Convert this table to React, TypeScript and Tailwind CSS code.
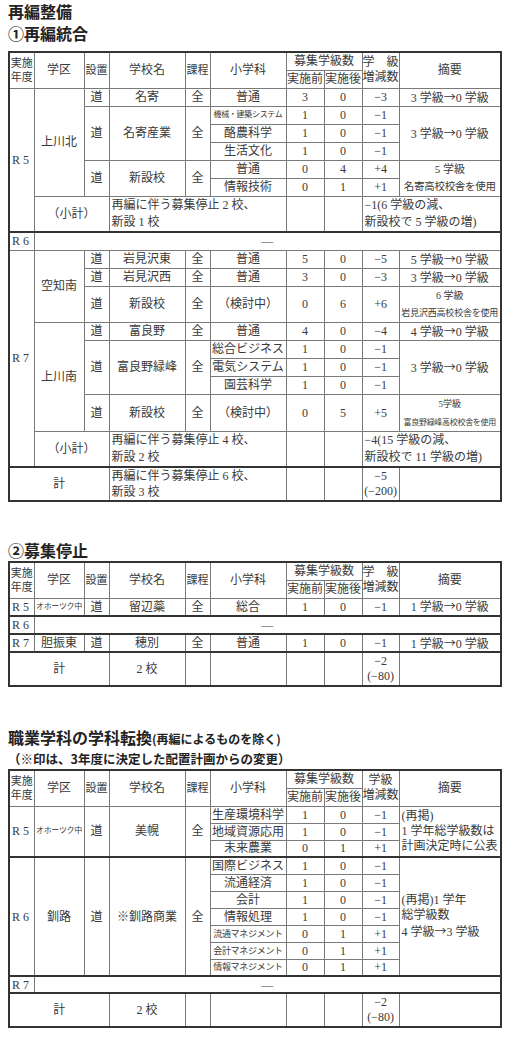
import React from 'react'

// 共通スタイル
const td = 'border border-[#7a7a7a] p-0 text-center align-middle leading-[14px]'
const tdL = 'border border-[#7a7a7a] p-0 pl-[2px] text-left align-middle leading-[14px]'
const thick = 'border-t-2 border-t-[#333]'

function Cols() {
  return (
    <colgroup>
      <col className="w-[25px]" />
      <col className="w-[50px]" />
      <col className="w-[25px]" />
      <col className="w-[76px]" />
      <col className="w-[25px]" />
      <col className="w-[76px]" />
      <col className="w-[38px]" />
      <col className="w-[38px]" />
      <col className="w-[37px]" />
      <col className="w-[102px]" />
    </colgroup>
  )
}

// 「3 学級→0 学級」の表記
function Shift({ from, to }: { from: string; to: string }) {
  return (
    <>
      {from} 学級<span className="font-['Noto_Sans_CJK_JP',sans-serif]">→</span>{to} 学級
    </>
  )
}

function Head({ stacked }: { stacked?: boolean }) {
  return (
    <thead>
      <tr className="h-[18px]">
        <td rowSpan={2} className={td + ' text-[11px] leading-[13px]'}>
          実施<br />年度
        </td>
        <td rowSpan={2} className={td}>学区</td>
        <td rowSpan={2} className={td + ' text-[11px]'}>設置</td>
        <td rowSpan={2} className={td}>学校名</td>
        <td rowSpan={2} className={td + ' text-[11px]'}>課程</td>
        <td rowSpan={2} className={td}>小学科</td>
        <td colSpan={2} className={td}>募集学級数</td>
        <td rowSpan={2} className={td + ' leading-[15px]'}>
          {stacked ? '学級' : '学　級'}
          <br />
          増減数
        </td>
        <td rowSpan={2} className={td}>摘要</td>
      </tr>
      <tr className="h-[18px]">
        <td className={td}>実施前</td>
        <td className={td}>実施後</td>
      </tr>
    </thead>
  )
}

function Num({ a, b, c }: { a: string; b: string; c: string }) {
  return (
    <>
      <td className={td}>{a}</td>
      <td className={td}>{b}</td>
      <td className={td}>{c}</td>
    </>
  )
}

function Year({ label, span }: { label: string; span?: number }) {
  return (
    <td rowSpan={span} className={tdL + ' pl-[1px]'}>
      {label}
    </td>
  )
}

function Title({ children, className = '' }: { children: React.ReactNode; className?: string }) {
  return (
    <div className={"px-[8px] font-['Noto_Sans_CJK_JP',sans-serif] text-[16px] font-bold leading-[22px] text-[#222] " + className}>
      {children}
    </div>
  )
}

const tableCls =
  "ml-[8px] w-[492px] table-fixed border-collapse border-2 border-[#333] font-['Liberation_Serif','Noto_Sans_CJK_JP',serif] text-[12px] text-[#3a3a3a]"

const two = ' leading-[17px]'

function Table1() {
  return (
    <table className={tableCls}>
      <Cols />
      <Head />
      <tbody>
        <tr className="h-[18px]">
          <Year label="R 5" span={7} />
          <td rowSpan={6} className={td}>上川北</td>
          <td className={td}>道</td>
          <td className={td}>名寄</td>
          <td className={td}>全</td>
          <td className={td}>普通</td>
          <Num a="3" b="0" c="−3" />
          <td className={td}><Shift from="3" to="0" /></td>
        </tr>
        <tr className="h-[18px]">
          <td rowSpan={3} className={td}>道</td>
          <td rowSpan={3} className={td}>名寄産業</td>
          <td rowSpan={3} className={td}>全</td>
          <td className={td + ' text-[8px] tracking-[-0.3px]'}>機械・建築システム</td>
          <Num a="1" b="0" c="−1" />
          <td rowSpan={3} className={td}><Shift from="3" to="0" /></td>
        </tr>
        <tr className="h-[18px]">
          <td className={td}>酪農科学</td>
          <Num a="1" b="0" c="−1" />
        </tr>
        <tr className="h-[18px]">
          <td className={td}>生活文化</td>
          <Num a="1" b="0" c="−1" />
        </tr>
        <tr className="h-[18px]">
          <td rowSpan={2} className={td}>道</td>
          <td rowSpan={2} className={td}>新設校</td>
          <td rowSpan={2} className={td}>全</td>
          <td className={td}>普通</td>
          <Num a="0" b="4" c="+4" />
          <td rowSpan={2} className={td + two}>
            <span className="text-[11px]">5 学級</span>
            <br />
            <span className="text-[10.5px] tracking-[-0.3px]">名寄高校校舎を使用</span>
          </td>
        </tr>
        <tr className="h-[18px]">
          <td className={td}>情報技術</td>
          <Num a="0" b="1" c="+1" />
        </tr>
        <tr className="h-[36px]">
          <td colSpan={2} className={td}>（小計）</td>
          <td colSpan={3} className={tdL + two}>
            再編に伴う募集停止 2 校、
            <br />
            新設 1 校
          </td>
          <td className={td}></td>
          <td className={td}></td>
          <td colSpan={2} className={tdL + two}>
            −1(6 学級の減、
            <br />
            新設校で 5 学級の増)
          </td>
        </tr>
        <tr className={'h-[18px] ' + thick}>
          <Year label="R 6" />
          <td colSpan={9} className={td}>—</td>
        </tr>
        <tr className="h-[18px]">
          <Year label="R 7" span={9} />
          <td rowSpan={3} className={td}>空知南</td>
          <td className={td}>道</td>
          <td className={td}>岩見沢東</td>
          <td className={td}>全</td>
          <td className={td}>普通</td>
          <Num a="5" b="0" c="−5" />
          <td className={td}><Shift from="5" to="0" /></td>
        </tr>
        <tr className="h-[18px]">
          <td className={td}>道</td>
          <td className={td}>岩見沢西</td>
          <td className={td}>全</td>
          <td className={td}>普通</td>
          <Num a="3" b="0" c="−3" />
          <td className={td}><Shift from="3" to="0" /></td>
        </tr>
        <tr className="h-[36px]">
          <td className={td}>道</td>
          <td className={td}>新設校</td>
          <td className={td}>全</td>
          <td className={td}>（検討中）</td>
          <Num a="0" b="6" c="+6" />
          <td className={td + two}>
            <span className="text-[10px]">6 学級</span>
            <br />
            <span className="text-[9px] tracking-[-0.2px]">岩見沢西高校校舎を使用</span>
          </td>
        </tr>
        <tr className="h-[18px]">
          <td rowSpan={5} className={td}>上川南</td>
          <td className={td}>道</td>
          <td className={td}>富良野</td>
          <td className={td}>全</td>
          <td className={td}>普通</td>
          <Num a="4" b="0" c="−4" />
          <td className={td}><Shift from="4" to="0" /></td>
        </tr>
        <tr className="h-[18px]">
          <td rowSpan={3} className={td}>道</td>
          <td rowSpan={3} className={td}>富良野緑峰</td>
          <td rowSpan={3} className={td}>全</td>
          <td className={td}>総合ビジネス</td>
          <Num a="1" b="0" c="−1" />
          <td rowSpan={3} className={td}><Shift from="3" to="0" /></td>
        </tr>
        <tr className="h-[18px]">
          <td className={td}>電気システム</td>
          <Num a="1" b="0" c="−1" />
        </tr>
        <tr className="h-[18px]">
          <td className={td}>園芸科学</td>
          <Num a="1" b="0" c="−1" />
        </tr>
        <tr className="h-[36px]">
          <td className={td}>道</td>
          <td className={td}>新設校</td>
          <td className={td}>全</td>
          <td className={td}>（検討中）</td>
          <Num a="0" b="5" c="+5" />
          <td className={td + two}>
            <span className="text-[9px]">5学級</span>
            <br />
            <span className="text-[8px] tracking-[-0.3px]">富良野緑峰高校校舎を使用</span>
          </td>
        </tr>
        <tr className="h-[36px]">
          <td colSpan={2} className={td}>（小計）</td>
          <td colSpan={3} className={tdL + two}>
            再編に伴う募集停止 4 校、
            <br />
            新設 2 校
          </td>
          <td className={td}></td>
          <td className={td}></td>
          <td colSpan={2} className={tdL + two}>
            −4(15 学級の減、
            <br />
            新設校で 11 学級の増)
          </td>
        </tr>
        <tr className={'h-[34px] ' + thick}>
          <td colSpan={3} className={td}>計</td>
          <td colSpan={3} className={tdL + ' leading-[16px]'}>
            再編に伴う募集停止 6 校、
            <br />
            新設 3 校
          </td>
          <td className={td}></td>
          <td className={td}></td>
          <td className={td + ' leading-[15px]'}>
            −5
            <br />
            (−200)
          </td>
          <td className={td}></td>
        </tr>
      </tbody>
    </table>
  )
}

function Table2() {
  return (
    <table className={tableCls}>
      <Cols />
      <Head />
      <tbody>
        <tr className="h-[18px]">
          <Year label="R 5" />
          <td className={td + ' text-[8px] tracking-[-0.3px]'}>オホーツク中</td>
          <td className={td}>道</td>
          <td className={td}>留辺蘂</td>
          <td className={td}>全</td>
          <td className={td}>総合</td>
          <Num a="1" b="0" c="−1" />
          <td className={td}><Shift from="1" to="0" /></td>
        </tr>
        <tr className={'h-[18px] ' + thick}>
          <Year label="R 6" />
          <td colSpan={9} className={td}>—</td>
        </tr>
        <tr className={'h-[18px] ' + thick}>
          <Year label="R 7" />
          <td className={td}>胆振東</td>
          <td className={td}>道</td>
          <td className={td}>穂別</td>
          <td className={td}>全</td>
          <td className={td}>普通</td>
          <Num a="1" b="0" c="−1" />
          <td className={td}><Shift from="1" to="0" /></td>
        </tr>
        <tr className={'h-[34px] ' + thick}>
          <td colSpan={3} className={td}>計</td>
          <td className={td}>2 校</td>
          <td className={td}></td>
          <td className={td}></td>
          <td className={td}></td>
          <td className={td}></td>
          <td className={td + ' leading-[15px]'}>
            −2
            <br />
            (−80)
          </td>
          <td className={td}></td>
        </tr>
      </tbody>
    </table>
  )
}

function Table3() {
  const r6 = [
    { name: '国際ビジネス', a: '1', b: '0', c: '−1' },
    { name: '流通経済', a: '1', b: '0', c: '−1' },
    { name: '会計', a: '1', b: '0', c: '−1' },
    { name: '情報処理', a: '1', b: '0', c: '−1' },
    { name: '流通マネジメント', a: '0', b: '1', c: '+1', small: true },
    { name: '会計マネジメント', a: '0', b: '1', c: '+1', small: true },
    { name: '情報マネジメント', a: '0', b: '1', c: '+1', small: true },
  ]
  return (
    <table className={tableCls}>
      <Cols />
      <Head stacked />
      <tbody>
        <tr className="h-[17px]">
          <Year label="R 5" span={3} />
          <td rowSpan={3} className={td + ' text-[8px] tracking-[-0.3px]'}>オホーツク中</td>
          <td rowSpan={3} className={td}>道</td>
          <td rowSpan={3} className={td}>美幌</td>
          <td rowSpan={3} className={td}>全</td>
          <td className={td}>生産環境科学</td>
          <Num a="1" b="0" c="−1" />
          <td rowSpan={3} className={tdL + ' leading-[15px]'}>
            (再掲)
            <br />
            1 学年総学級数は
            <br />
            計画決定時に公表
          </td>
        </tr>
        <tr className="h-[17px]">
          <td className={td}>地域資源応用</td>
          <Num a="1" b="0" c="−1" />
        </tr>
        <tr className="h-[17px]">
          <td className={td}>未来農業</td>
          <Num a="0" b="1" c="+1" />
        </tr>
        {r6.map((r, i) => (
          <tr key={r.name} className={'h-[17px] ' + (i === 0 ? thick : '')}>
            {i === 0 && (
              <>
                <Year label="R 6" span={7} />
                <td rowSpan={7} className={td}>釧路</td>
                <td rowSpan={7} className={td}>道</td>
                <td rowSpan={7} className={td}>※釧路商業</td>
                <td rowSpan={7} className={td}>全</td>
              </>
            )}
            <td className={td + (r.small ? ' text-[9px] tracking-[-0.3px]' : '')}>{r.name}</td>
            <Num a={r.a} b={r.b} c={r.c} />
            {i === 0 && (
              <td rowSpan={7} className={tdL + ' leading-[15px]'}>
                (再掲)1 学年
                <br />
                総学級数
                <br />
                <Shift from="4" to="3" />
              </td>
            )}
          </tr>
        ))}
        <tr className={'h-[17px] ' + thick}>
          <Year label="R 7" />
          <td colSpan={9} className={td}>—</td>
        </tr>
        <tr className={'h-[34px] ' + thick}>
          <td colSpan={3} className={td}>計</td>
          <td className={td}>2 校</td>
          <td className={td}></td>
          <td className={td}></td>
          <td className={td}></td>
          <td className={td}></td>
          <td className={td + ' leading-[15px]'}>
            −2
            <br />
            (−80)
          </td>
          <td className={td}></td>
        </tr>
      </tbody>
    </table>
  )
}

export default function App() {
  return (
    <div className="min-h-[1051px] w-[509px] bg-white">
      <Title>再編整備</Title>
      <Title>①再編統合</Title>
      <div className="mt-[7px]">
        <Table1 />
      </div>

      <Title className="mt-[37px]">②募集停止</Title>
      <div className="mt-[0px]">
        <Table2 />
      </div>

      <Title className="mt-[39px]">
        職業学科の学科転換<span className="text-[12px]">(再編によるものを除く)</span>
      </Title>
      <div className="px-[8px] font-['Noto_Sans_CJK_JP',sans-serif] text-[12.5px] font-bold leading-[18px] text-[#222]">
        （※印は、3年度に決定した配置計画からの変更）
      </div>
      <div className="mt-[1px]">
        <Table3 />
      </div>
    </div>
  )
}
